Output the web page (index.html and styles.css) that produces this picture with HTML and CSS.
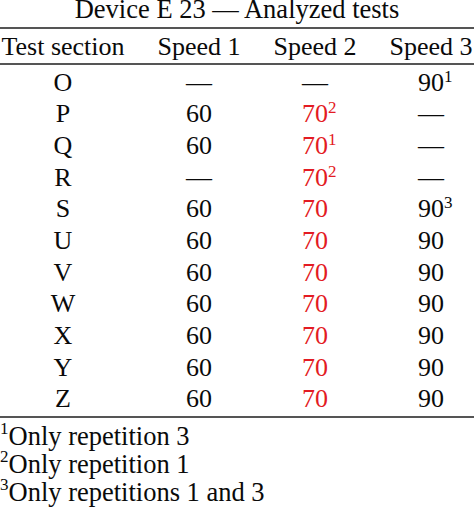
FILE: index.html
```html
<!DOCTYPE html>
<html>
<head>
<meta charset="utf-8">
<link rel="stylesheet" href="styles.css">
</head>
<body>
<div class="page">
  <div class="caption">Device E 23 — Analyzed tests</div>
  <div class="rule rule-top"></div>
  <div class="grid head">
    <div>Test section</div><div>Speed 1</div><div>Speed 2</div><div>Speed 3</div>
  </div>
  <div class="rule rule-mid"></div>
  <div class="grid body">
    <div>O</div><div>—</div><div>—</div><div>90<sup class="fn">1</sup></div>
    <div>P</div><div>60</div><div class="red">70<sup class="fn">2</sup></div><div>—</div>
    <div>Q</div><div>60</div><div class="red">70<sup class="fn">1</sup></div><div>—</div>
    <div>R</div><div>—</div><div class="red">70<sup class="fn">2</sup></div><div>—</div>
    <div>S</div><div>60</div><div class="red">70</div><div>90<sup class="fn">3</sup></div>
    <div>U</div><div>60</div><div class="red">70</div><div>90</div>
    <div>V</div><div>60</div><div class="red">70</div><div>90</div>
    <div>W</div><div>60</div><div class="red">70</div><div>90</div>
    <div>X</div><div>60</div><div class="red">70</div><div>90</div>
    <div>Y</div><div>60</div><div class="red">70</div><div>90</div>
    <div>Z</div><div>60</div><div class="red">70</div><div>90</div>
  </div>
  <div class="rule rule-bot"></div>
  <div class="notes">
    <div class="note"><sup class="mark">1</sup>Only repetition 3</div>
    <div class="note"><sup class="mark">2</sup>Only repetition 1</div>
    <div class="note"><sup class="mark">3</sup>Only repetitions 1 and 3</div>
  </div>
</div>
</body>
</html>
```

FILE: styles.css
```css
html, body {
  margin: 0;
  padding: 0;
  background: #ffffff;
}
.page {
  width: 474px;
  height: 512px;
  overflow: hidden;
  font-family: "Liberation Serif", "Times New Roman", serif;
  font-size: 26px;
  color: #0a0a0a;
}
.caption {
  font-size: 26.5px;
  text-align: center;
  line-height: 19px;
  height: 19px;
  margin-bottom: 8px;
  white-space: nowrap;
}
.rule {
  background: #555555;
  height: 1.5px;
}
.grid {
  display: grid;
  grid-template-columns: 126px 86px 86px 86px;
  column-gap: 30px;
  justify-items: center;
  white-space: nowrap;
}
.head {
  line-height: 31.65px;
  padding: 2px 0 1px;
}
.body {
  line-height: 31.65px;
  padding: 2px 0 1.5px;
}
.red {
  color: #e31b23;
}
.fn {
  display: inline-block;
  width: 0;
  font-size: 17px;
  line-height: 0;
  vertical-align: 9px;
}
.notes {
  font-size: 26.5px;
  line-height: 28px;
  margin-top: 4px;
}
.note {
  white-space: nowrap;
}
.mark {
  font-size: 17px;
  line-height: 0;
  vertical-align: 11px;
}
```
